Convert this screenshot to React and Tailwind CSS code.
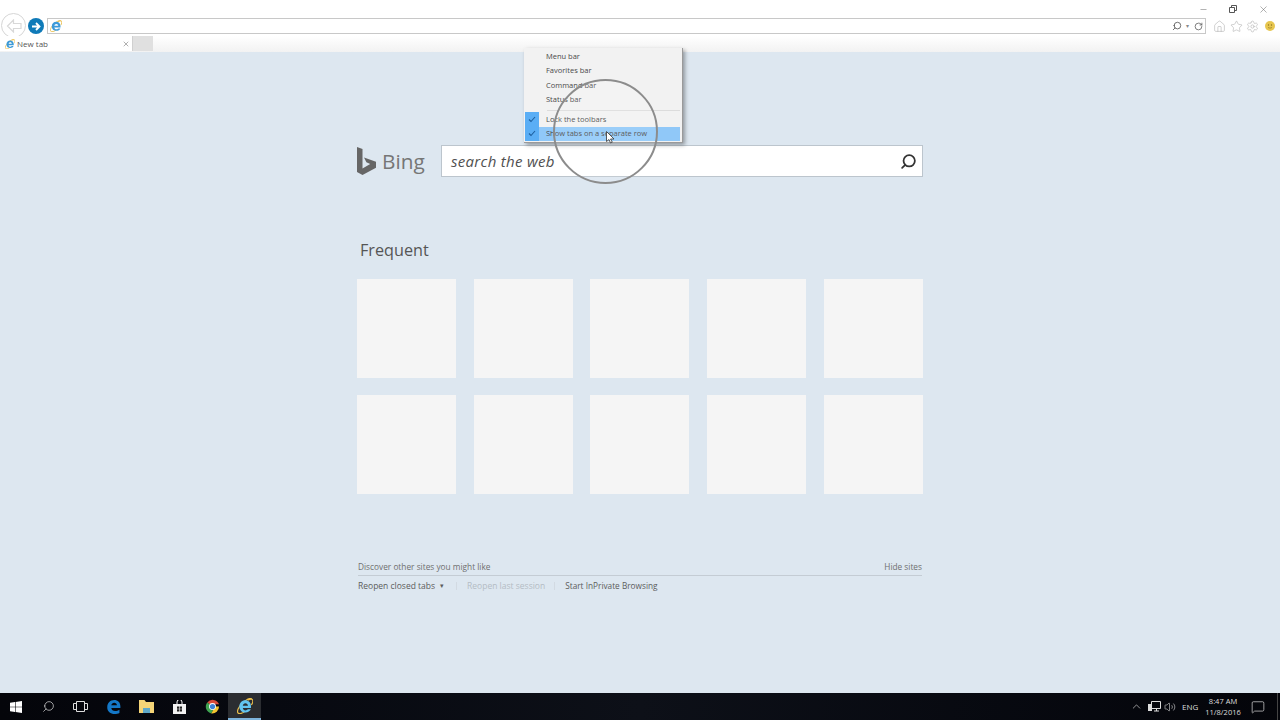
import React from "react";
import { Search, RotateCw, Home, Star, Settings, X, Minus, ChevronUp, Volume2, MessageSquare } from "lucide-react";

const IE = ({ s = 12, light = false }) => (
  <svg width={s} height={s} viewBox="0 0 24 24" className="shrink-0">
    <path d="M22.500 1.500C19.500-.500 13 3 7.500 8.500 2 14-.500 20 1.500 22.500c2 2 7 .5 10.500-2.500M16 3.500c3-1.500 6-2.200 7-1 1.300 1.500.5 5-1.500 8" fill="none" stroke="#e9bd4a" strokeWidth="1.800" />
    <path fillRule="evenodd" fill={light ? "#62c4f0" : "#3d9ad8"} d="M3.500 13C3.500 7.500 7.500 3.500 12.500 3.500S21 7.200 21 12.500V15H8.700c.3 2.400 1.900 3.600 4 3.600 1.500 0 2.700-.6 3.400-1.700h4.600c-1.100 3.100-4.200 4.800-8 4.800-5 0-9.200-3.500-9.200-8.700zM8.700 11.500h7.800c-.2-2.300-1.800-3.700-3.900-3.700-2 0-3.600 1.400-3.900 3.700z" />
  </svg>
);

const Tile = () => <div className="h-[99px] w-[99px] bg-[#f5f5f5]" />;

const MenuItem = ({ label, checked, active }) => (
  <div className={`flex h-[14.5px] items-center ${active ? "bg-[#90c8f8]" : ""}`}>
    <div className={`flex h-full w-[14px] items-center justify-center ${checked ? "bg-[#5aaef5]" : ""}`}>
      {checked && (
        <svg width="8" height="7" viewBox="0 0 8 7" fill="none" stroke="#1d5f9e" strokeWidth="1.100">
          <path d="M1 3.500 3 5.500 7 1" />
        </svg>
      )}
    </div>
    <span className="ml-[7px] whitespace-nowrap text-[7.500px] text-[#4a4a4a]">{label}</span>
  </div>
);

const TaskIcon = ({ children, active }) => (
  <div className={`flex h-full w-[33px] items-center justify-center ${active ? "-ml-px border-b-2 border-[#7eb4dc] bg-[#2b2d31]" : ""}`}>
    {children}
  </div>
);

export default function App() {
  return (
    <div className="relative flex h-[720px] w-[1280px] flex-col overflow-hidden bg-[#dde7f0] font-['Open_Sans','Liberation_Sans',sans-serif]">
      {/* Toolbar */}
      <div className="flex h-[36px] bg-white">
        <div className="flex items-end pl-[1px]">
          <div className="mb-[-2px] flex h-[25px] w-[25px] items-center justify-center rounded-full border border-[#d6d6d6]">
            <svg width="16" height="14" viewBox="0 0 16 14" fill="none" stroke="#d8d8d8" strokeWidth="1.200">
              <path d="M7.500 1 1.500 7l6 6V9.500H15v-5H7.500z" />
            </svg>
          </div>
          <div className="mb-[2px] ml-[2px] flex h-[16px] w-[16px] items-center justify-center rounded-full bg-[#0f7ab8]">
            <svg width="10" height="9" viewBox="0 0 10 9" fill="none" stroke="#fff" strokeWidth="1.800">
              <path d="M1 4.500h7M5 1l3.500 3.500L5 8" />
            </svg>
          </div>
        </div>
        <div className="ml-[3px] flex flex-1 flex-col">
          <div className="flex h-[18px] items-center justify-end text-[#555]">
            <Minus size={9} strokeWidth={1.200} className="mr-[21px]" />
            <svg width="8" height="8" viewBox="0 0 8 8" fill="none" stroke="#555" className="mr-[21px]">
              <path d="M.5 2.500h5v5h-5zM2.500 2.500v-2h5v5h-2" />
            </svg>
            <X size={11} strokeWidth={1} className="mr-[11px]" />
          </div>
          <div className="flex items-center">
            <div className="flex h-[16px] w-[1159px] items-center border border-[#c8c8c8] pl-[2px] pr-[2px]">
              <IE s={12} />
              <div className="ml-auto flex items-center text-[#555]">
                <Search size={10} strokeWidth={2} className="-scale-x-100" />
                <span className="ml-[4px] mr-[5px] text-[6px] text-[#888]">▾</span>
                <RotateCw size={9} strokeWidth={2} />
              </div>
            </div>
            <Home size={13} strokeWidth={1} className="ml-[7px] text-[#aaa]" />
            <Star size={13} strokeWidth={1} className="ml-[4px] text-[#aaa]" />
            <Settings size={13} strokeWidth={1} className="ml-[3px] text-[#aaa]" />
            <svg width="10" height="10" viewBox="0 0 10 10" className="ml-[6px]">
              <circle cx="5" cy="5" r="5" fill="#e7c64f" />
              <circle cx="3.500" cy="4" r=".7" fill="#8a7420" />
              <circle cx="6.500" cy="4" r=".7" fill="#8a7420" />
              <path d="M3 6.500q2 1.300 4 0" stroke="#8a7420" strokeWidth=".6" fill="none" />
            </svg>
          </div>
        </div>
      </div>

      {/* Tabs */}
      <div className="flex h-[16px] bg-gradient-to-b from-white to-[#f2f2f2]">
        <div className="flex h-[15px] w-[133px] items-center border-r border-[#d0d0d0] bg-white pl-[5px] pr-[2px] text-[8px] text-[#555]">
          <IE s={10} />
          <span className="ml-[2px] mt-[1px]">New tab</span>
          <X size={8} strokeWidth={2} className="ml-auto text-[#888]" />
        </div>
        <div className="h-[15px] w-[20px] bg-[#e0e0e0]" />
      </div>

      {/* Page */}
      <main className="mx-auto flex w-[566px] flex-1 flex-col">
        <div className="mt-[93px] flex h-[32px] items-center">
          <svg width="20" height="28" viewBox="0 0 20 28" className="shrink-0">
            <path d="M0 0l5.500 1.900v19.500l7.700-4.400-3.800-1.800L7 10.500l12 4.200v6L5.500 28 0 25z" fill="#666" />
          </svg>
          <span className="ml-[5px] w-[59px] text-[20.800px] leading-none text-[#767676]">Bing</span>
          <div className="flex h-[32px] flex-1 items-center border border-[#bcc5cd] bg-white pl-[9px] pr-[5px]">
            <span className="text-[15px] italic tracking-[0.3px] text-[#505050]">search the web</span>
            <Search size={17} strokeWidth={2.500} className="ml-auto -scale-x-100 text-[#333]" />
          </div>
        </div>
        <h2 className="ml-[3px] mt-[61px] text-[16.200px] leading-[24px] text-[#555]">Frequent</h2>
        <div className="mt-[17px] grid grid-cols-5 gap-x-[17.500px] gap-y-[17px]">
          {Array.from({ length: 10 }).map((_, i) => <Tile key={i} />)}
        </div>
        <div className="ml-[1px] mr-[1px] mt-[66px] flex h-[16px] items-center justify-between border-b border-[#c4ccd4] pb-[1px] text-[8.300px] text-[#6f6f6f]">
          <span>Discover other sites you might like</span>
          <span>Hide sites</span>
        </div>
        <div className="ml-[1px] mt-[3px] flex h-[14px] items-center text-[8.500px] text-[#5c5c5c]">
          <span>Reopen closed tabs</span>
          <span className="ml-[5px] text-[7px]">▾</span>
          <span className="ml-[12px] h-[8px] w-px bg-[#d2dae2]" />
          <span className="ml-[10px] text-[#b4bcc4]">Reopen last session</span>
          <span className="ml-[9px] h-[8px] w-px bg-[#d2dae2]" />
          <span className="ml-[10px] text-[8.250px]">Start InPrivate Browsing</span>
        </div>
      </main>

      {/* Taskbar */}
      <footer className="flex h-[27px] items-center bg-gradient-to-r from-[#04050a] via-[#0d1018] to-[#04050a] text-[#ddd]">
        <div className="flex h-full w-[31px] items-center justify-center">
          <svg width="12" height="12" viewBox="0 0 12 12" fill="#fff">
            <path d="M0 1.700 5 1v4.700H0zM5.600.900 12 0v5.700H5.600zM0 6.300h5V11L0 10.300zM5.600 6.300H12V12l-6.400-.9z" />
          </svg>
        </div>
        <div className="flex h-full w-[33px] items-center justify-center pl-[2px]">
          <Search size={13} strokeWidth={1.300} className="-scale-x-100 text-[#ddd]" />
        </div>
        <div className="flex h-full w-[33px] items-center justify-center">
          <svg width="15" height="11" viewBox="0 0 15 11" fill="none" stroke="#ddd">
            <path d="M3.500.5h8v10h-8zM3.500 2.500h-3v6h3M11.500 2.500h3v6h-3" />
          </svg>
        </div>
        <TaskIcon>
          <svg width="15" height="15" viewBox="0 0 24 24">
            <path d="M2 13C2 6 7 1.500 13 1.500c6 0 10 4 10 10v3H8.500c.3 3 2.700 4.800 6 4.800 2.800 0 5-.8 7-2v5c-2 1.200-5 1.700-7.500 1.700-7 0-12-4-12-10.500zM8.500 10h9c-.1-2.500-2-4-4.300-4-2.400 0-4.300 1.500-4.700 4z" fill="#1478c8" fillRule="evenodd" />
          </svg>
        </TaskIcon>
        <TaskIcon>
          <svg width="15" height="13" viewBox="0 0 15 13">
            <path d="M0 0h5.500l1.500 2H15v11H0z" fill="#f4d477" />
            <rect x="4" y="8" width="7" height="5" fill="#5fa8c8" />
          </svg>
        </TaskIcon>
        <TaskIcon>
          <svg width="13" height="14" viewBox="0 0 13 14">
            <path d="M0 4h13v10H0z" fill="#f2f2f2" />
            <path d="M4 4V2a2.500 2.500 0 0 1 5 0v2" fill="none" stroke="#f2f2f2" strokeWidth="1" />
            <path d="M4 6.500h2.200v2.200H4zM6.800 6.500H9v2.200H6.800zM4 9.300h2.200v2.200H4zM6.800 9.300H9v2.200H6.800z" fill="#222" />
          </svg>
        </TaskIcon>
        <TaskIcon>
          <svg width="15" height="15" viewBox="0 0 24 24">
            <path d="M12 12 3.600 5.500A11 11 0 0 1 22.500 8.500H12z" fill="#d94a3a" />
            <path d="M12 12 3.600 5.500A11 11 0 0 0 10 23l5-9z" fill="#3fa451" />
            <path d="M12 12h10.500A11 11 0 0 1 10 23l5-9z" fill="#f3c531" />
            <circle cx="12" cy="12" r="5.500" fill="#fff" />
            <circle cx="12" cy="12" r="4.200" fill="#3d82d8" />
          </svg>
        </TaskIcon>
        <TaskIcon active>
          <IE s={16} light />
        </TaskIcon>

        <div className="ml-auto flex h-full items-center">
          <ChevronUp size={13} strokeWidth={1.200} />
          <svg width="13" height="11" viewBox="0 0 13 11" fill="none" stroke="#ddd" className="ml-[4.500px]">
            <path d="M3.500.5h9v7h-9zM6 10h5M8.500 8v2" />
            <rect x="0" y="3" width="4" height="7" fill="#ddd" stroke="none" />
          </svg>
          <Volume2 size={12} strokeWidth={1.200} className="ml-[3.500px]" />
          <span className="ml-[6px] w-[15px] text-[8px]">ENG</span>
          <div className="ml-[7px] flex w-[38px] flex-col items-center text-[7.500px] leading-[11px]">
            <span>8:47 AM</span>
            <span>11/8/2016</span>
          </div>
          <MessageSquare size={14} strokeWidth={1.200} className="ml-[9px]" />
          <div className="ml-[12px] h-full w-[3px] border-l border-[#444]" />
        </div>
      </footer>

      {/* Context menu */}
      <div className="absolute left-[524px] top-[48px] h-[95px] w-[159px] border-b border-r border-[#9a9a9a] bg-[#f2f2f2] pl-px pr-[2px] pt-px shadow-[2px_2px_4px_rgba(0,0,0,0.35)]">
        <MenuItem label="Menu bar" />
        <MenuItem label="Favorites bar" />
        <MenuItem label="Command bar" />
        <MenuItem label="Status bar" />
        <div className="mb-[1px] ml-[22px] h-[4px] border-b border-[#dcdcdc]" />
        <MenuItem label="Lock the toolbars" checked />
        <MenuItem label="Show tabs on a separate row" checked active />
      </div>

      {/* Magnifier ring and pointer */}
      <div className="absolute left-[553px] top-[79px] h-[105px] w-[105px] rounded-full border-2 border-[#8c8c8c] bg-white/10" />
      <svg width="9" height="13" viewBox="0 0 9 13" className="absolute left-[606px] top-[131px]">
        <path d="M.5.500v10l2.500-2 1.500 3.500 1.800-.8L4.500 8H8z" fill="#fff" stroke="#333" strokeWidth=".8" />
      </svg>
    </div>
  );
}
